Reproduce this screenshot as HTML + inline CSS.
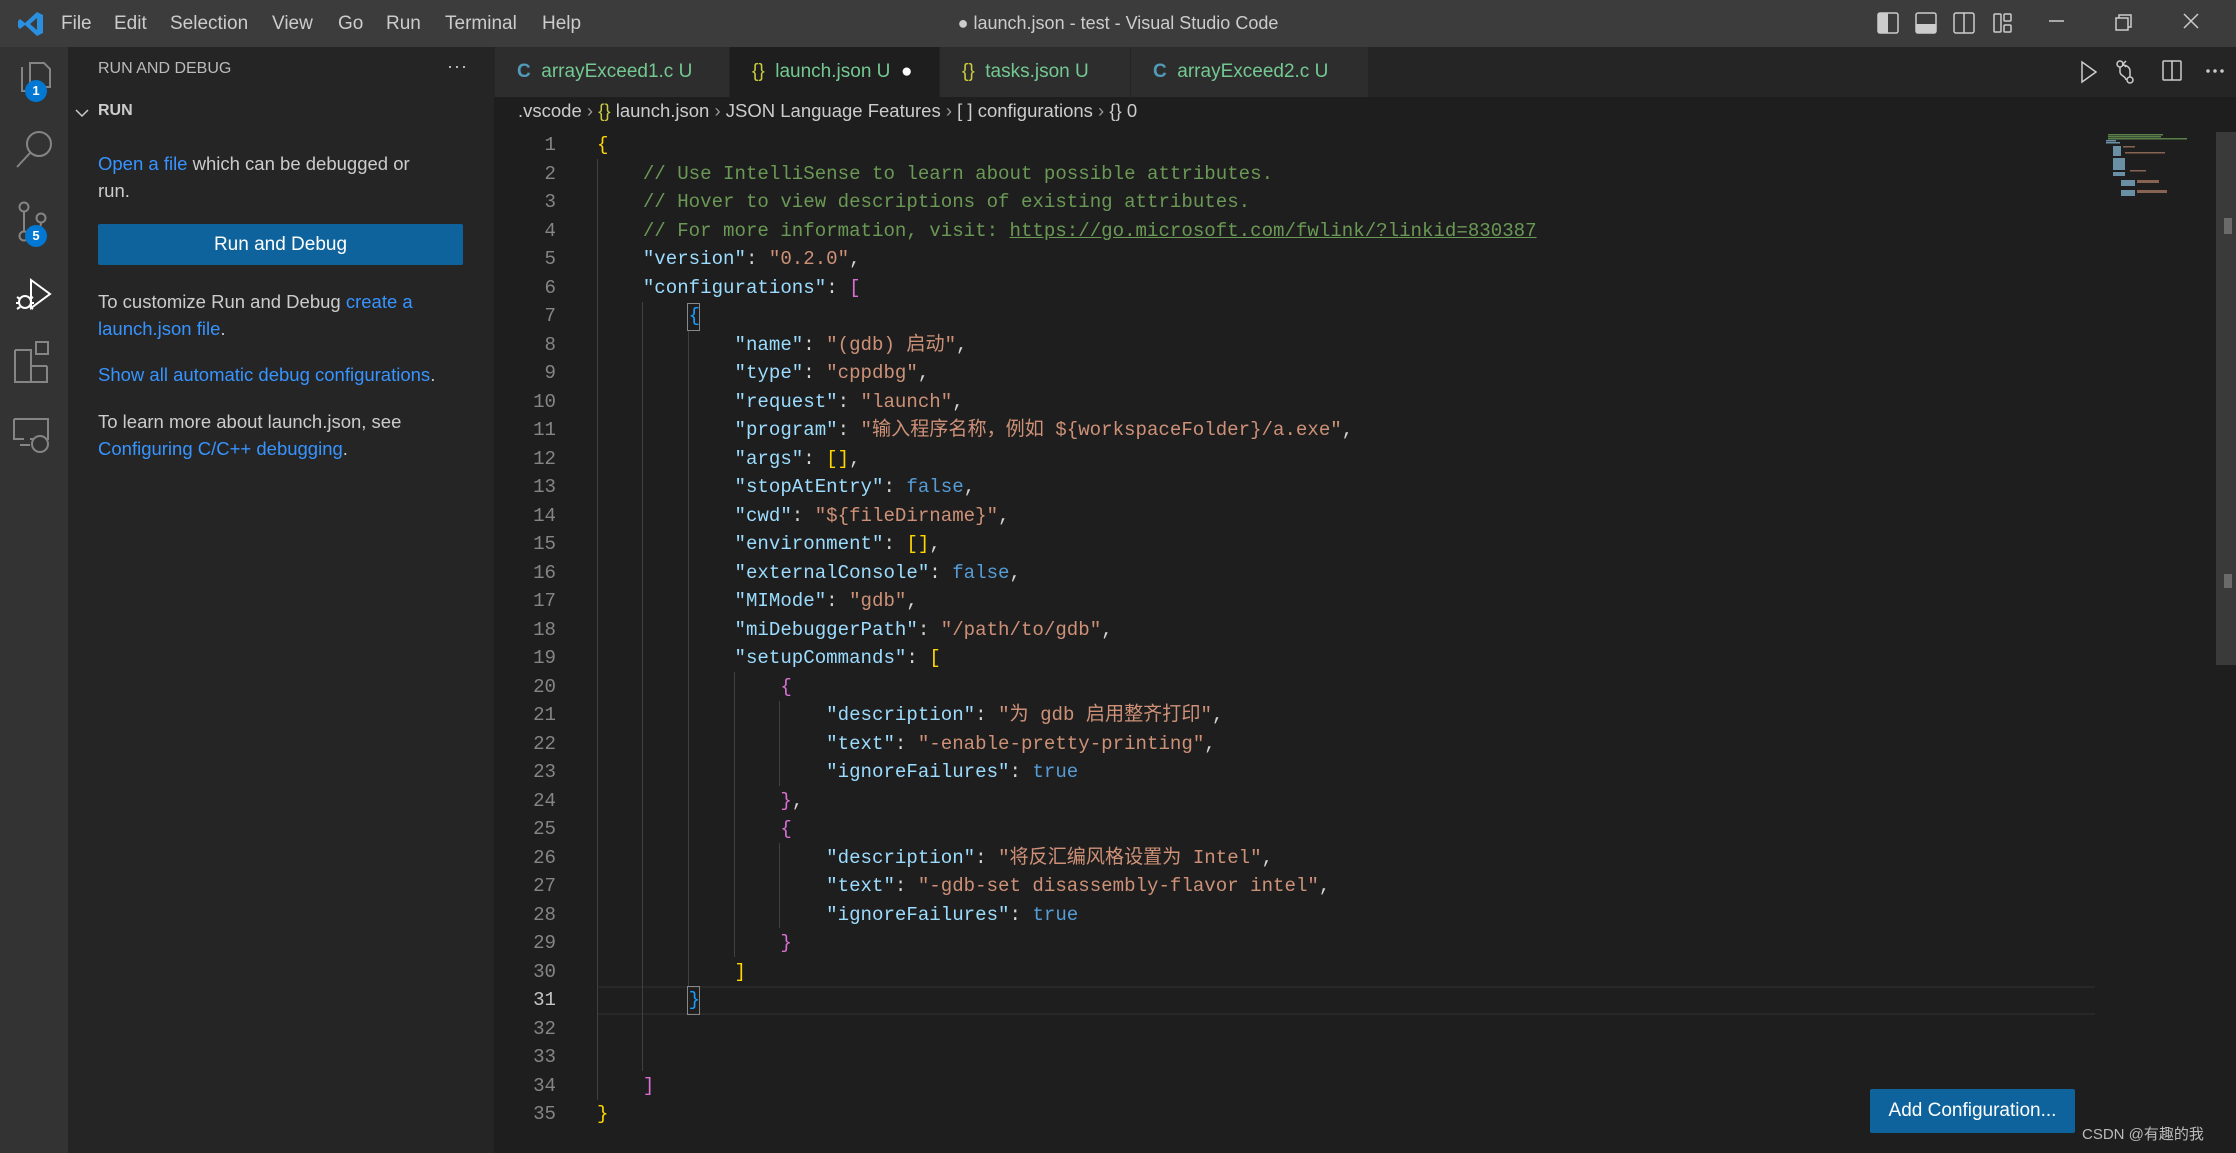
<!DOCTYPE html>
<html><head><meta charset="utf-8">
<style>
*{margin:0;padding:0;box-sizing:border-box}
body{width:2236px;height:1153px;background:#1e1e1e;overflow:hidden;position:relative;font-family:"Segoe UI","Liberation Sans","Noto Sans CJK SC",sans-serif;color:#ccc}
.abs{position:absolute}
#title{left:0;top:0;width:2236px;height:47px;background:#3c3c3c}
.menu{top:0;height:47px;line-height:47px;font-size:19px;color:#ccc}
#act{left:0;top:47px;width:68px;height:1106px;background:#333}
#side{left:68px;top:47px;width:426px;height:1106px;background:#252526}
.st{font-size:18.5px;color:#ccc;line-height:27px}
.lk{color:#3794ff}
#tabs{left:494px;top:47px;width:1742px;height:50px;background:#252526}
.tab{top:47px;height:50px;background:#2d2d2d;font-size:19px;line-height:50px;color:#73c991;border-right:1px solid #252526}
.code{font-family:"Liberation Mono","Noto Sans CJK SC",monospace;font-size:19.1px;white-space:pre;line-height:28.5px;height:28.5px}
.ln{left:494px;width:62px;text-align:right;color:#858585}
.cl{left:597px}
.k{color:#9cdcfe}.s{color:#ce9178}.c{color:#6a9955}.b{color:#569cd6}.p{color:#d4d4d4}
.y{color:#ffd700}.m{color:#da70d6}.u{color:#179fff}
.g{width:1px;background:#404040}
</style></head><body>
<div id="title" class="abs"></div>
<svg class="abs" style="left:18px;top:11px" width="26" height="26" viewBox="0 0 26 26"><path d="M19 1 L25 4 V22 L19 25 L7 14 L2 18 L0 16 V10 L2 8 L7 12 Z M19 7 L12 13 L19 19 Z" fill="#2b8fe0"/></svg>
<div class="abs menu" style="left:61px">File</div>
<div class="abs menu" style="left:114px">Edit</div>
<div class="abs menu" style="left:170px">Selection</div>
<div class="abs menu" style="left:272px">View</div>
<div class="abs menu" style="left:338px">Go</div>
<div class="abs menu" style="left:386px">Run</div>
<div class="abs menu" style="left:445px">Terminal</div>
<div class="abs menu" style="left:542px">Help</div>
<div class="abs menu" style="left:0;width:2236px;text-align:center;font-size:18px;padding-left:0">● launch.json - test - Visual Studio Code</div>
<svg class="abs" style="left:1870px;top:10px" width="366" height="28">
 <g fill="none" stroke="#ccc" stroke-width="1.5">
 <rect x="8" y="3" width="20" height="20" rx="2"/><rect x="46" y="3" width="20" height="20" rx="2"/><rect x="84" y="3" width="20" height="20" rx="2"/>
 <line x1="94" y1="3" x2="94" y2="23"/>
 <rect x="124" y="4" width="7" height="18" rx="1"/><rect x="134" y="4" width="7" height="7" rx="1"/><rect x="134" y="15" width="7" height="7" rx="1"/>
 <line x1="179" y1="11" x2="194" y2="11"/>
 <rect x="246" y="8" width="12" height="12"/><path d="M249 8V5h12v12h-3"/>
 <path d="M314 4l14 14M328 4l-14 14"/></g>
 <rect x="8" y="3" width="10" height="20" fill="#ccc"/><rect x="46" y="14" width="20" height="9" fill="#ccc"/>
</svg>

<div id="act" class="abs"></div>
<svg class="abs" style="left:0;top:47px" width="68" height="420" fill="none" stroke="#858585" stroke-width="2">
 <path d="M22 20v24h18M30 16h14l6 6v18H30z"/>
 <circle cx="39" cy="97" r="12"/><path d="M30 106l-13 14"/>
 <circle cx="24" cy="160" r="4.5"/><circle cx="24" cy="189" r="4.5"/><circle cx="41" cy="171" r="4.5"/><path d="M24 165v19M41 176c0 8-10 8-15 11"/>
 <path d="M31 233l19 14-19 14z" stroke="#fff"/><circle cx="25" cy="255" r="6" stroke="#fff"/><path d="M17 250l3 2M33 250l-3 2M16 256h4M30 256h4M17 262l3-2M33 262l-3-2" stroke="#fff"/>
 <path d="M15 303h16v16h16M15 303v32h32v-16M31 319v16" /><rect x="36" y="295" width="12" height="12"/>
 <path d="M14 372h34v20H30M14 372v20h10M20 398h10"/><circle cx="40" cy="397" r="8" fill="#333"/>
</svg>
<div class="abs" style="left:25px;top:80px;width:22px;height:22px;border-radius:11px;background:#0078d4;color:#fff;font-size:13px;font-weight:bold;text-align:center;line-height:22px">1</div>
<div class="abs" style="left:25px;top:225px;width:22px;height:22px;border-radius:11px;background:#0078d4;color:#fff;font-size:13px;font-weight:bold;text-align:center;line-height:22px">5</div>

<div id="side" class="abs"></div>
<div class="abs" style="left:98px;top:60px;font-size:16px;color:#bbb">RUN AND DEBUG</div>
<div class="abs" style="left:447px;top:56px;font-size:18px;color:#ccc;letter-spacing:1px">···</div>
<svg class="abs" style="left:74px;top:106px" width="16" height="14"><path d="M2 4l6 6 6-6" fill="none" stroke="#ccc" stroke-width="1.5"/></svg>
<div class="abs" style="left:98px;top:102px;font-size:16px;font-weight:bold;color:#ccc">RUN</div>
<div class="abs st" style="left:98px;top:150px;width:345px"><span class="lk">Open a file</span> which can be debugged or run.</div>
<div class="abs" style="left:98px;top:224px;width:365px;height:41px;background:#0e639c;color:#fff;font-size:19px;line-height:41px;text-align:center;border-radius:2px">Run and Debug</div>
<div class="abs st" style="left:98px;top:288px;width:360px">To customize Run and Debug <span class="lk">create a launch.json file</span>.</div>
<div class="abs st" style="left:98px;top:361px;width:380px"><span class="lk">Show all automatic debug configurations</span>.</div>
<div class="abs st" style="left:98px;top:408px;width:360px">To learn more about launch.json, see <span class="lk">Configuring C/C++ debugging</span>.</div>

<div id="tabs" class="abs"></div>
<div class="abs tab" style="left:495px;width:235px;padding-left:22px"><span style="color:#519aba;font-weight:bold">C</span>&nbsp; arrayExceed1.c U</div>
<div class="abs tab" style="left:730px;width:210px;background:#1e1e1e;padding-left:22px"><span style="color:#cbcb41">{}</span>&nbsp; launch.json U &nbsp;<span style="color:#fff">●</span></div>
<div class="abs tab" style="left:940px;width:191px;padding-left:22px"><span style="color:#cbcb41">{}</span>&nbsp; tasks.json U</div>
<div class="abs tab" style="left:1131px;width:238px;padding-left:22px"><span style="color:#519aba;font-weight:bold">C</span>&nbsp; arrayExceed2.c U</div>
<svg class="abs" style="left:2070px;top:55px" width="166" height="34" fill="none" stroke="#ccc" stroke-width="1.5">
 <path d="M12 7l14 10-14 10z"/>
 <circle cx="50" cy="9" r="3"/><circle cx="60" cy="25" r="3"/><path d="M50 12v5c0 4 6 4 6 8M60 22v-6c0-4-4-6-8-6M56 6l-3 3 3 3"/>
 <rect x="93" y="6" width="18" height="19" rx="1"/><line x1="102" y1="6" x2="102" y2="25"/>
 <circle cx="138" cy="16" r="1" fill="#ccc"/><circle cx="145" cy="16" r="1" fill="#ccc"/><circle cx="152" cy="16" r="1" fill="#ccc"/>
</svg>
<div class="abs" style="left:518px;top:100px;font-size:18.5px;color:#ccc;white-space:pre">.vscode <span style="color:#999">›</span> <span style="color:#cbcb41">{}</span> launch.json <span style="color:#999">›</span> JSON Language Features <span style="color:#999">›</span> [ ] configurations <span style="color:#999">›</span> {} 0</div>

<div class="abs" style="left:597px;top:986px;width:1498px;height:29px;border-top:2px solid #282828;border-bottom:2px solid #282828"></div>
<div class="abs g" style="left:597px;top:159px;height:941px"></div>
<div class="abs g" style="left:642px;top:302px;height:769px"></div>
<div class="abs g" style="left:688px;top:330px;height:656px"></div>
<div class="abs g" style="left:734px;top:672px;height:285px"></div>
<div class="abs g" style="left:779px;top:701px;height:85px"></div>
<div class="abs g" style="left:779px;top:843px;height:85px"></div>
<div class="abs" style="left:687px;top:303px;width:13px;height:28px;border:1px solid #888"></div>
<div class="abs" style="left:687px;top:986px;width:13px;height:29px;border:1px solid #888"></div>

<div class="abs" style="top:131px;left:0">
<div class="abs code ln" style="top:0">1</div><div class="abs code cl" style="top:0"><span class="y">{</span></div>
<div class="abs code ln" style="top:28.5px">2</div><div class="abs code cl c" style="top:28.5px">    // Use IntelliSense to learn about possible attributes.</div>
<div class="abs code ln" style="top:57px">3</div><div class="abs code cl c" style="top:57px">    // Hover to view descriptions of existing attributes.</div>
<div class="abs code ln" style="top:85.5px">4</div><div class="abs code cl c" style="top:85.5px">    // For more information, visit: <span style="text-decoration:underline">https://go.microsoft.com/fwlink/?linkid=830387</span></div>
<div class="abs code ln" style="top:114px">5</div><div class="abs code cl" style="top:114px">    <span class="k">"version"</span><span class="p">: </span><span class="s">"0.2.0"</span><span class="p">,</span></div>
<div class="abs code ln" style="top:142.5px">6</div><div class="abs code cl" style="top:142.5px">    <span class="k">"configurations"</span><span class="p">: </span><span class="m">[</span></div>
<div class="abs code ln" style="top:171px">7</div><div class="abs code cl" style="top:171px">        <span class="u">{</span></div>
<div class="abs code ln" style="top:199.5px">8</div><div class="abs code cl" style="top:199.5px">            <span class="k">"name"</span><span class="p">: </span><span class="s">"(gdb) 启动"</span><span class="p">,</span></div>
<div class="abs code ln" style="top:228px">9</div><div class="abs code cl" style="top:228px">            <span class="k">"type"</span><span class="p">: </span><span class="s">"cppdbg"</span><span class="p">,</span></div>
<div class="abs code ln" style="top:256.5px">10</div><div class="abs code cl" style="top:256.5px">            <span class="k">"request"</span><span class="p">: </span><span class="s">"launch"</span><span class="p">,</span></div>
<div class="abs code ln" style="top:285px">11</div><div class="abs code cl" style="top:285px">            <span class="k">"program"</span><span class="p">: </span><span class="s">"输入程序名称，例如 ${workspaceFolder}/a.exe"</span><span class="p">,</span></div>
<div class="abs code ln" style="top:313.5px">12</div><div class="abs code cl" style="top:313.5px">            <span class="k">"args"</span><span class="p">: </span><span class="y">[]</span><span class="p">,</span></div>
<div class="abs code ln" style="top:342px">13</div><div class="abs code cl" style="top:342px">            <span class="k">"stopAtEntry"</span><span class="p">: </span><span class="b">false</span><span class="p">,</span></div>
<div class="abs code ln" style="top:370.5px">14</div><div class="abs code cl" style="top:370.5px">            <span class="k">"cwd"</span><span class="p">: </span><span class="s">"${fileDirname}"</span><span class="p">,</span></div>
<div class="abs code ln" style="top:399px">15</div><div class="abs code cl" style="top:399px">            <span class="k">"environment"</span><span class="p">: </span><span class="y">[]</span><span class="p">,</span></div>
<div class="abs code ln" style="top:427.5px">16</div><div class="abs code cl" style="top:427.5px">            <span class="k">"externalConsole"</span><span class="p">: </span><span class="b">false</span><span class="p">,</span></div>
<div class="abs code ln" style="top:456px">17</div><div class="abs code cl" style="top:456px">            <span class="k">"MIMode"</span><span class="p">: </span><span class="s">"gdb"</span><span class="p">,</span></div>
<div class="abs code ln" style="top:484.5px">18</div><div class="abs code cl" style="top:484.5px">            <span class="k">"miDebuggerPath"</span><span class="p">: </span><span class="s">"/path/to/gdb"</span><span class="p">,</span></div>
<div class="abs code ln" style="top:513px">19</div><div class="abs code cl" style="top:513px">            <span class="k">"setupCommands"</span><span class="p">: </span><span class="y">[</span></div>
<div class="abs code ln" style="top:541.5px">20</div><div class="abs code cl" style="top:541.5px">                <span class="m">{</span></div>
<div class="abs code ln" style="top:570px">21</div><div class="abs code cl" style="top:570px">                    <span class="k">"description"</span><span class="p">: </span><span class="s">"为 gdb 启用整齐打印"</span><span class="p">,</span></div>
<div class="abs code ln" style="top:598.5px">22</div><div class="abs code cl" style="top:598.5px">                    <span class="k">"text"</span><span class="p">: </span><span class="s">"-enable-pretty-printing"</span><span class="p">,</span></div>
<div class="abs code ln" style="top:627px">23</div><div class="abs code cl" style="top:627px">                    <span class="k">"ignoreFailures"</span><span class="p">: </span><span class="b">true</span></div>
<div class="abs code ln" style="top:655.5px">24</div><div class="abs code cl" style="top:655.5px">                <span class="m">}</span><span class="p">,</span></div>
<div class="abs code ln" style="top:684px">25</div><div class="abs code cl" style="top:684px">                <span class="m">{</span></div>
<div class="abs code ln" style="top:712.5px">26</div><div class="abs code cl" style="top:712.5px">                    <span class="k">"description"</span><span class="p">: </span><span class="s">"将反汇编风格设置为 Intel"</span><span class="p">,</span></div>
<div class="abs code ln" style="top:741px">27</div><div class="abs code cl" style="top:741px">                    <span class="k">"text"</span><span class="p">: </span><span class="s">"-gdb-set disassembly-flavor intel"</span><span class="p">,</span></div>
<div class="abs code ln" style="top:769.5px">28</div><div class="abs code cl" style="top:769.5px">                    <span class="k">"ignoreFailures"</span><span class="p">: </span><span class="b">true</span></div>
<div class="abs code ln" style="top:798px">29</div><div class="abs code cl" style="top:798px">                <span class="m">}</span></div>
<div class="abs code ln" style="top:826.5px">30</div><div class="abs code cl" style="top:826.5px">            <span class="y">]</span></div>
<div class="abs code ln" style="top:855px;color:#c6c6c6">31</div><div class="abs code cl" style="top:855px">        <span class="u">}</span></div>
<div class="abs code ln" style="top:883.5px">32</div>
<div class="abs code ln" style="top:912px">33</div>
<div class="abs code ln" style="top:940.5px">34</div><div class="abs code cl" style="top:940.5px">    <span class="m">]</span></div>
<div class="abs code ln" style="top:969px">35</div><div class="abs code cl" style="top:969px"><span class="y">}</span></div>
</div>

<svg class="abs" style="left:2100px;top:130px" width="120" height="80">
 <g fill="#6a9955" opacity=".8"><rect x="8" y="4" width="55" height="1.5"/><rect x="8" y="6" width="53" height="1.5"/><rect x="8" y="8" width="79" height="1.5"/></g>
 <g fill="#9cdcfe" opacity=".6"><rect x="6" y="10" width="10" height="1.5"/><rect x="6" y="12" width="14" height="1.5"/>
 <rect x="13" y="16" width="8" height="10"/><rect x="13" y="28" width="12" height="12"/><rect x="13" y="42" width="12" height="4"/>
 <rect x="21" y="50" width="14" height="6"/><rect x="21" y="60" width="14" height="6"/></g>
 <g fill="#ce9178" opacity=".6"><rect x="23" y="16" width="12" height="1.5"/><rect x="25" y="22" width="40" height="1.5"/><rect x="30" y="40" width="16" height="1.5"/>
 <rect x="37" y="50" width="22" height="3"/><rect x="37" y="60" width="30" height="3"/></g>
</svg>
<div class="abs" style="left:2216px;top:132px;width:20px;height:533px;background:#3a3a3a"></div>
<div class="abs" style="left:2224px;top:218px;width:8px;height:16px;background:#6a6a6a"></div>
<div class="abs" style="left:2224px;top:574px;width:8px;height:14px;background:#6a6a6a"></div>

<div class="abs" style="left:1870px;top:1089px;width:205px;height:44px;background:#0e639c;border-radius:2px;color:#fff;font-size:19px;line-height:44px;text-align:center">Add Configuration...</div>
<div class="abs" style="left:2082px;top:1123px;font-size:15px;color:#bbb;font-family:'Liberation Sans','Noto Sans CJK SC',sans-serif">CSDN @有趣的我</div>
</body></html>
